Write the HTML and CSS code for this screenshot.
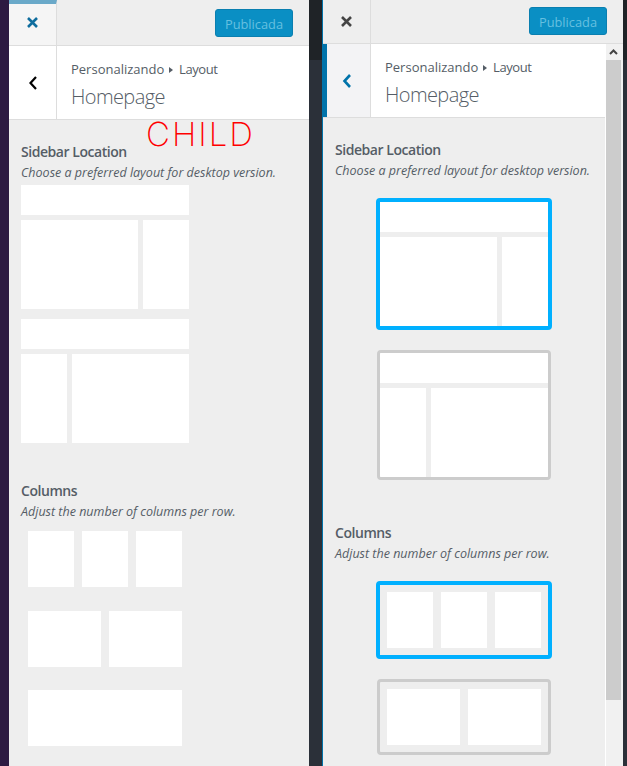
FILE: index.html
```html
<!DOCTYPE html>
<html lang="pt">
<head>
<meta charset="utf-8">
<title>Personalizando Layout</title>
<link rel="stylesheet" href="styles.css">
</head>
<body>
<div class="page">
  <div class="strip-purple"></div>

  <section class="panel panel-child">
    <header class="topbar">
      <a class="close close-active">
        <svg width="13" height="13" viewBox="0 0 13 13"><path d="M2 2 L11 11 M11 2 L2 11" class="ico-blue"/></svg>
      </a>
      <button class="publish">Publicada</button>
    </header>
    <div class="heading">
      <a class="back">
        <svg width="10" height="16" viewBox="0 0 10 16"><path d="M8 2 L2.5 8 L8 14" class="ico-black"/></svg>
      </a>
      <div class="heading-text">
        <div class="crumb">Personalizando <span class="tri"></span> <span class="crumb-end">Layout</span></div>
        <h1>Homepage</h1>
      </div>
    </div>
    <div class="content">
      <h2>Sidebar Location</h2>
      <p>Choose a preferred layout for desktop version.</p>
      <div class="wire wire-first">
        <div class="w-top"></div>
        <div class="w-row"><div class="w-main"></div><div class="w-side"></div></div>
      </div>
      <div class="wire wire-next">
        <div class="w-top"></div>
        <div class="w-row"><div class="w-side"></div><div class="w-main"></div></div>
      </div>
      <h2 class="h-columns">Columns</h2>
      <p>Adjust the number of columns per row.</p>
      <div class="cols cols-1"><div></div><div></div><div></div></div>
      <div class="cols cols-2"><div></div><div></div></div>
      <div class="cols cols-3"><div></div></div>
    </div>
    <span class="note">CHILD</span>
  </section>

  <div class="gutter"></div>

  <section class="panel panel-parent">
    <header class="topbar">
      <a class="close">
        <svg width="13" height="13" viewBox="0 0 13 13"><path d="M2 2 L11 11 M11 2 L2 11" class="ico-dark"/></svg>
      </a>
      <button class="publish">Publicada</button>
    </header>
    <div class="scrollarea">
      <div class="scroller">
        <div class="heading">
          <a class="back back-active">
            <svg width="10" height="16" viewBox="0 0 10 16"><path d="M8 2 L2.5 8 L8 14" class="ico-blue"/></svg>
          </a>
          <div class="heading-text">
            <div class="crumb">Personalizando <span class="tri"></span> <span class="crumb-end">Layout</span></div>
            <h1>Homepage</h1>
          </div>
        </div>
        <div class="content">
          <h2>Sidebar Location</h2>
          <p>Choose a preferred layout for desktop version.</p>
          <div class="options options-layout">
            <div class="frame frame-on">
              <div class="wire">
                <div class="w-top"></div>
                <div class="w-row"><div class="w-main"></div><div class="w-side"></div></div>
              </div>
            </div>
            <div class="frame">
              <div class="wire">
                <div class="w-top"></div>
                <div class="w-row"><div class="w-side"></div><div class="w-main"></div></div>
              </div>
            </div>
          </div>
          <h2 class="h-columns-parent">Columns</h2>
          <p>Adjust the number of columns per row.</p>
          <div class="options options-cols">
            <div class="frame frame-on frame-cols"><div class="cols"><div></div><div></div><div></div></div></div>
            <div class="frame frame-cols"><div class="cols"><div></div><div></div></div></div>
          </div>
        </div>
      </div>
      <div class="scrollbar">
        <div class="sb-btn">
          <svg width="9" height="6" viewBox="0 0 9 6"><path d="M1 5 L4.5 1.5 L8 5" class="ico-sb"/></svg>
        </div>
        <div class="sb-thumb"></div>
      </div>
    </div>
  </section>

  <div class="strip-dark"></div>
</div>
</body>
</html>
```
FILE: styles.css
```css
* { box-sizing: border-box; }
html, body { margin: 0; padding: 0; height: 100%; overflow: hidden; }
body { font-family: "Open Sans", "Noto Sans", sans-serif; color: #555d66; background: #2b3039; }

.page { display: flex; width: 627px; height: 766px; overflow: hidden; }
.strip-purple { width: 9px; background: #2d1a42; flex: none; }
.strip-dark { width: 4px; flex: none; background: linear-gradient(#1f2327 60px, #2b3039 60px); }
.gutter { width: 14px; flex: none; border-right: 1px solid #0073aa; background: linear-gradient(#1f2327 60px, #2b3039 60px); }

.panel { position: relative; width: 300px; flex: none; background: #eee; display: flex; flex-direction: column; }

.topbar { display: flex; justify-content: space-between; align-items: flex-start; background: #eee; border-bottom: 1px solid #ddd; flex: none; }
.panel-child .topbar { height: 46px; padding-right: 16px; }
.panel-parent .topbar { height: 44px; padding-right: 16px; }

.close { width: 48px; height: 100%; display: flex; align-items: center; justify-content: center; border-right: 1px solid #ddd; }
.close-active { background: #f5f5f5; border-top: 4px solid #6aa9c9; padding-bottom: 4px; }

.publish { margin-top: 7px; width: 78px; height: 28px; padding: 1px 0 0; font: 12.8px/26px "Open Sans", "Noto Sans", sans-serif; color: #66c0e0; background: #0a8fc4; border: 1px solid #0a7fb0; border-radius: 3px; }
.panel-child .publish { margin-top: 9px; }

.heading { display: flex; background: #fff; border-bottom: 1px solid #ddd; height: 74px; }
.back { width: 48px; flex: none; display: flex; align-items: center; justify-content: center; border-right: 1px solid #ddd; background: #fff; padding-left: 1px; }
.back-active { background: #f3f3f5; border-left: 4px solid #0073aa; padding-left: 0; padding-right: 3px; }
.heading-text { padding: 13px 0 0 14px; }
.crumb { font-size: 13px; line-height: 20px; color: #555d66; }
.crumb-end { letter-spacing: -0.4px; }
.tri { display: inline-block; width: 0; height: 0; margin: 0 3px 1px 1px; border-left: 4px solid #555d66; border-top: 3px solid transparent; border-bottom: 3px solid transparent; }
h1 { margin: 5px 0 0; font-size: 20px; font-weight: 300; line-height: 26px; letter-spacing: -0.6px; color: #555d66; }

.content { padding: 22px 0 0 12px; }
h2 { margin: 0; font-size: 14px; font-weight: 600; line-height: 20px; letter-spacing: -0.45px; color: #555d66; }
p { margin: 2px 0 0; font-size: 12.5px; font-style: italic; line-height: 18px; color: #555d66; }
.h-columns { margin-top: 38px; }
.h-columns-parent { margin-top: 43px; }

.wire { display: flex; flex-direction: column; gap: 5px; width: 168px; }
.wire-first { margin-top: 3px; }
.wire-next { margin-top: 10px; }
.w-top { height: 30px; background: #fff; }
.w-row { display: flex; justify-content: space-between; height: 89px; }
.w-main { width: 117px; background: #fff; }
.w-side { width: 46px; background: #fff; }

.cols { display: flex; gap: 8px; width: 154px; height: 56px; margin-left: 7px; }
.cols div { flex: 1; background: #fff; }
.cols-1 { margin-top: 10px; }
.cols-2 { margin-top: 24px; }
.cols-3 { margin-top: 23px; }

.note { position: absolute; left: 137px; top: 114px; font: 200 33px/40px Inter, "Liberation Sans", sans-serif; letter-spacing: 2px; color: #f00; }

.scrollarea { flex: 1; display: flex; min-height: 0; }
.scroller { width: 283px; flex: none; border-right: 1px solid #fff; overflow: hidden; }
.options { display: flex; flex-direction: column; align-items: center; gap: 20px; margin-left: -12px; }
.options-layout { margin-top: 18px; }
.options-cols { margin-top: 18px; }
.frame { width: 174px; height: 130px; border: 3px solid #ccc; border-radius: 4px; background: #eee; overflow: hidden; }
.frame .wire { width: 168px; }
.frame-on { width: 176px; height: 132px; border: 4px solid #00b0ff; }
.frame-cols { height: 76px; padding: 7px 7px 0; }
.frame-cols .cols { margin: 0; }
.frame-on.frame-cols { height: 78px; padding: 7px 7px 0; }

.scrollbar { width: 17px; flex: none; background: #f1f1f1; display: flex; flex-direction: column; }
.sb-btn { height: 16px; display: flex; align-items: center; justify-content: center; padding-right: 2px; }
.sb-thumb { width: 15px; height: 640px; background: #ccc; }

svg { display: block; fill: none; }
.ico-blue { stroke: #0f6d9e; stroke-width: 2.6; }
.ico-dark { stroke: #444; stroke-width: 2.6; }
.ico-black { stroke: #000; stroke-width: 2.2; }
.ico-sb { stroke: #444; stroke-width: 2; }
.back-active .ico-blue { stroke: #0073aa; }
```
